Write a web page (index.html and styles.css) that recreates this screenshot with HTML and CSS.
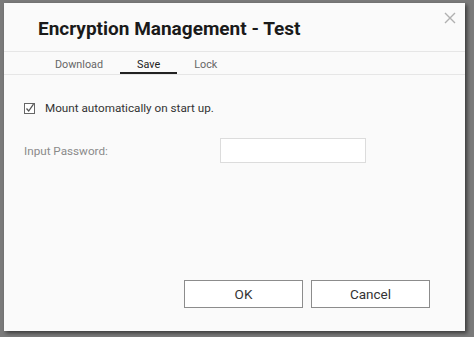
FILE: index.html
```html
<!DOCTYPE html>
<html>
<head>
<meta charset="utf-8">
<link rel="stylesheet" href="styles.css">
</head>
<body>
<div class="backdrop">
  <div class="dialog">
    <div class="header">
      <h1 class="title">Encryption Management - Test</h1>
      <button class="close" aria-label="Close">
        <svg width="12" height="12" viewBox="0 0 12 12"><path d="M1 1 L11 11 M11 1 L1 11" stroke="#b0b0b0" stroke-width="1.4" fill="none"/></svg>
      </button>
    </div>
    <div class="tabs">
      <div class="tab">Download</div>
      <div class="tab active">Save</div>
      <div class="tab">Lock</div>
    </div>
    <div class="content">
      <label class="check-row">
        <span class="checkbox">
          <svg width="11" height="11" viewBox="0 0 11 11"><rect x="0.5" y="0.5" width="10" height="10" fill="#fff" stroke="#666" stroke-width="1"/><path d="M2.5 5.5 L4.7 8 L9.5 1.2" stroke="#555" stroke-width="1.3" fill="none"/></svg>
        </span>
        <span class="check-label">Mount automatically on start up.</span>
      </label>
      <div class="field-row">
        <span class="field-label">Input Password:</span>
        <span class="input"></span>
      </div>
    </div>
    <div class="footer">
      <button class="btn">OK</button>
      <button class="btn">Cancel</button>
    </div>
  </div>
</div>
</body>
</html>
```
FILE: styles.css
```css
html, body {
  margin: 0;
  padding: 0;
}
body {
  width: 474px;
  height: 337px;
  overflow: hidden;
  background: #7b7b7b;
  font-family: Roboto, "Liberation Sans", sans-serif;
}
.backdrop {
  padding: 3px 0 0 4px;
}
.dialog {
  width: 461px;
  height: 328px;
  background: #fafafa;
  box-shadow: 2px 2px 4px rgba(0, 0, 0, 0.55);
  display: flex;
  flex-direction: column;
  position: relative;
}
.header {
  height: 48px;
  border-bottom: 1px solid #e6e6e6;
  display: flex;
  align-items: flex-start;
  padding-left: 34px;
}
.title {
  margin: 0;
  padding-top: 15px;
  font-size: 19px;
  font-weight: 700;
  color: #1a1a1a;
  line-height: 22px;
}
.close {
  position: absolute;
  right: 9px;
  top: 9px;
  width: 12px;
  height: 12px;
  padding: 0;
  border: 0;
  background: none;
  display: flex;
}
.tabs {
  height: 22px;
  border-bottom: 1px solid #e6e6e6;
  display: flex;
  gap: 0;
  padding-left: 34px;
}
.tab {
  padding: 3px 17px 0;
  font-size: 10.8px;
  line-height: 19px;
  color: #666;
}
.tab.active {
  color: #222;
  box-shadow: inset 0 -2px 0 #222;
}
.content {
  flex: 1;
  padding: 26px 0 0 20px;
}
.check-row {
  display: flex;
  align-items: center;
  gap: 10px;
  height: 14px;
}
.checkbox {
  display: flex;
  width: 11px;
  height: 11px;
}
.check-label {
  font-size: 11.7px;
  color: #333;
}
.field-row {
  margin-top: 23px;
  display: flex;
  align-items: center;
  height: 25px;
}
.field-label {
  width: 196px;
  font-size: 11.7px;
  color: #8a8a8a;
}
.input {
  width: 144px;
  height: 23px;
  background: #fff;
  border: 1px solid #dcdcdc;
}
.footer {
  display: flex;
  justify-content: flex-end;
  gap: 8px;
  padding: 0 35px 23px 0;
}
.btn {
  width: 119px;
  height: 28px;
  background: #fff;
  border: 1px solid #8c8c8c;
  font-family: Roboto, "Liberation Sans", sans-serif;
  font-size: 13.5px;
  color: #333;
  padding: 0;
}
```
